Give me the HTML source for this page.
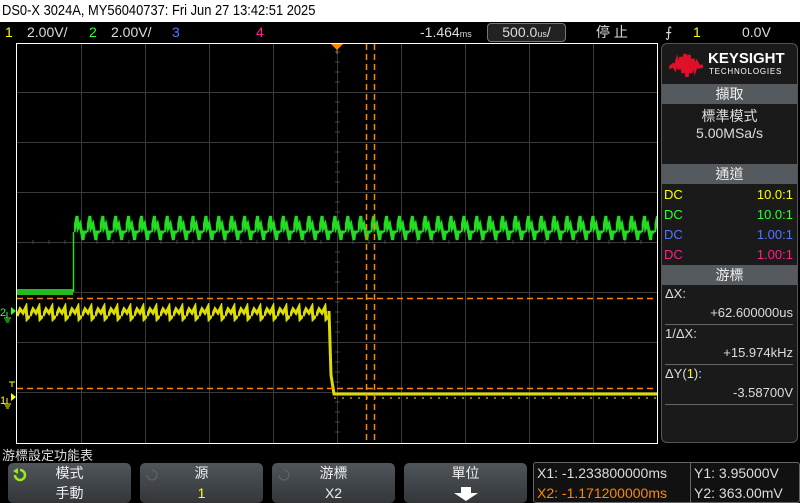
<!DOCTYPE html>
<html><head><meta charset="utf-8"><style>
*{margin:0;padding:0;box-sizing:border-box}
body{width:800px;height:503px;background:#000;position:relative;overflow:hidden;font-family:"Liberation Sans","Noto Sans CJK TC",sans-serif;color:#ddd}
.a{position:absolute;white-space:nowrap}
#title{left:0;top:0;width:800px;height:22px;background:#fff;color:#000;font-size:15px;line-height:22px;padding-left:2px}
.t{font-size:14px;top:22px;line-height:20px}
.panel{position:absolute;left:661px;top:43px;width:137px;height:400px;background:#1a1a1a;border:1px solid #555;border-radius:6px}
.hdr{position:absolute;left:0;width:135px;height:20px;background:#555a5e;color:#eee;font-size:14px;text-align:center;line-height:20px}
.btn{position:absolute;top:463px;height:40px;width:123px;border-radius:5px;background:linear-gradient(#50555a,#33373a);color:#eee;font-size:14px;text-align:center}
.btn div{height:20px;line-height:20px}
</style></head><body>
<div class="a" id="title"><span style="display:inline-block;transform:scaleX(0.86);transform-origin:left">DS0-X 3024A, MY56040737: Fri Jun 27 13:42:51 2025</span></div>
<div class="a t" style="left:5px;color:#ff0">1</div>
<div class="a t" style="left:27px">2.00V/</div>
<div class="a t" style="left:89px;color:#3f3">2</div>
<div class="a t" style="left:111px">2.00V/</div>
<div class="a t" style="left:172px;color:#57f">3</div>
<div class="a t" style="left:256px;color:#f28">4</div>
<div class="a t" style="left:420px">-1.464<span style="font-size:9px">ms</span></div>
<div class="a" style="left:487px;top:23px;width:79px;height:19px;border:1px solid #777;border-radius:4px;background:#222;font-size:14px;text-align:center;line-height:17px">500.0<span style="font-size:9px">us</span>/</div>
<div class="a t" style="left:596px">停 止</div>
<div class="a t" style="left:665px">&#x2A0D;</div>
<div class="a t" style="left:693px;color:#ff0">1</div>
<div class="a t" style="left:742px">0.0V</div>

<svg class="a" style="left:0;top:0" width="660" height="450">
<defs>
<pattern id="g" x="74" y="212" width="12.9" height="34" patternUnits="userSpaceOnUse">
<polyline points="0,20 3,4 4,16 6,12 9,28 10,20 12.9,20" fill="none" stroke="#2d2" stroke-width="3"/>
</pattern>
<pattern id="y" x="17" y="303" width="13" height="26" patternUnits="userSpaceOnUse">
<polyline points="0,13 3,6 6,10 9,4 10,16 13,13" fill="none" stroke="#dd0" stroke-width="3"/>
</pattern>
</defs>
<g stroke="#3a3a3a" stroke-width="1">
<path d="M81.5 43V443M145.5 43V443M209.5 43V443M273.5 43V443M337.5 43V443M401.5 43V443M465.5 43V443M529.5 43V443M593.5 43V443"/>
<path d="M16 92.5H657M16 142.5H657M16 192.5H657M16 242.5H657M16 292.5H657M16 342.5H657M16 392.5H657"/>
</g>
<g stroke="#444"><path d="M33 240v4M49 240v4M65 240v4M97 240v4M113 240v4M129 240v4M161 240v4M177 240v4M193 240v4M225 240v4M241 240v4M257 240v4M289 240v4M305 240v4M321 240v4M353 240v4M369 240v4M385 240v4M417 240v4M433 240v4M449 240v4M481 240v4M497 240v4M513 240v4M545 240v4M561 240v4M577 240v4M609 240v4M625 240v4M641 240v4"/>
<path d="M335 52h5M335 62h5M335 72h5M335 82h5M335 102h5M335 112h5M335 122h5M335 132h5M335 152h5M335 162h5M335 172h5M335 182h5M335 202h5M335 212h5M335 222h5M335 232h5M335 252h5M335 262h5M335 272h5M335 282h5M335 302h5M335 312h5M335 322h5M335 332h5M335 352h5M335 362h5M335 372h5M335 382h5M335 402h5M335 412h5M335 422h5M335 432h5"/></g>
<rect x="16.5" y="43.5" width="641" height="400" fill="none" stroke="#fff"/>
<rect x="17" y="289" width="56" height="6" fill="#2b2"/>
<path d="M73.5 292V232" stroke="#2d2" stroke-width="1.5"/>
<rect x="74" y="212" width="583" height="34" fill="url(#g)"/>
<rect x="17" y="303" width="312" height="26" fill="url(#y)"/>
<path d="M329 311L331 375L334 394H657" fill="none" stroke="#dd0" stroke-width="3"/>
<path d="M334 398H657" stroke="#770" stroke-width="2" stroke-dasharray="2 6"/>
<g stroke="#f80" stroke-width="1.5" stroke-dasharray="6 4">
<path d="M17 298.5H657M17 388.5H657M366.5 44V443M374.5 44V443"/></g>
<path d="M331 44h12l-6 6z" fill="#f80"/>
<path d="M337 50v4" stroke="#888"/>
<text x="0" y="316" fill="#3f3" font-size="11" font-family="Liberation Sans">2</text>
<path d="M11 307l5 4-5 4z" fill="#3f3"/><path d="M7 312v6M4 318h7M5 320h5M6 322h3" stroke="#3f3"/>
<text x="0" y="404" fill="#ff0" font-size="11" font-family="Liberation Sans">1</text>
<path d="M11 393l5 4-5 4z" fill="#ff0"/><path d="M7 398v6M4 404h7M5 406h5M6 408h3M9 382h6M12 382v5" stroke="#ff0"/>
</svg>

<div class="panel">
<svg style="position:absolute;left:7px;top:7px" width="40" height="28"><path d="M0 17 L4 14 6 17 8 10 10 18 12 6 14 22 16 3 18 26 20 4 22 22 24 8 26 18 28 12 30 16 34 15" fill="none" stroke="#e0102a" stroke-width="3.5"/></svg>
<div class="a" style="left:46px;top:6px;font-size:15px;font-weight:bold;color:#fff">KEYSIGHT</div>
<div class="a" style="left:47px;top:23px;font-size:8px;color:#fff;letter-spacing:0.8px">TECHNOLOGIES</div>
<div class="hdr" style="top:40px">擷取</div>
<div class="a" style="left:0;width:135px;text-align:center;top:62px;font-size:14px">標準模式</div>
<div class="a" style="left:0;width:135px;text-align:center;top:81px;font-size:14px">5.00MSa/s</div>
<div class="hdr" style="top:120px">通道</div>
<div class="a" style="left:2px;top:141px;font-size:13px;line-height:20px;color:#ff0">DC</div><div class="a" style="right:4px;top:141px;font-size:13px;line-height:20px;color:#ff0">10.0:1</div>
<div class="a" style="left:2px;top:161px;font-size:13px;line-height:20px;color:#3f3">DC</div><div class="a" style="right:4px;top:161px;font-size:13px;line-height:20px;color:#3f3">10.0:1</div>
<div class="a" style="left:2px;top:181px;font-size:13px;line-height:20px;color:#57f">DC</div><div class="a" style="right:4px;top:181px;font-size:13px;line-height:20px;color:#57f">1.00:1</div>
<div class="a" style="left:2px;top:201px;font-size:13px;line-height:20px;color:#f28">DC</div><div class="a" style="right:4px;top:201px;font-size:13px;line-height:20px;color:#f28">1.00:1</div>
<div class="hdr" style="top:221px">游標</div>
<div class="a" style="left:3px;top:242px;font-size:13px">ΔX:</div>
<div class="a" style="right:4px;top:261px;font-size:13px">+62.600000us</div>
<div class="a" style="left:3px;top:280px;width:128px;border-top:1px solid #666"></div>
<div class="a" style="left:3px;top:282px;font-size:13px">1/ΔX:</div>
<div class="a" style="right:4px;top:301px;font-size:13px">+15.974kHz</div>
<div class="a" style="left:3px;top:320px;width:128px;border-top:1px solid #666"></div>
<div class="a" style="left:3px;top:322px;font-size:13px">ΔY(<span style="color:#ff0">1</span>):</div>
<div class="a" style="right:4px;top:341px;font-size:13px">-3.58700V</div>
<div class="a" style="left:3px;top:360px;width:128px;border-top:1px solid #666"></div>
</div>

<div class="a" style="left:2px;top:445px;font-size:13px;color:#ddd">游標設定功能表</div>
<div class="btn" style="left:8px"><div>模式</div><div>手動</div>
<svg style="position:absolute;left:5px;top:5px" width="14" height="14"><path d="M7 2a5 5 0 1 1-5 5" fill="none" stroke="#9e1" stroke-width="2.5"/><path d="M0 3l5-3v6z" fill="#9e1"/></svg></div>
<div class="btn" style="left:140px"><div>源</div><div style="color:#ff0">1</div>
<svg style="position:absolute;left:5px;top:5px" width="14" height="14"><path d="M7 2a5 5 0 1 1-5 5" fill="none" stroke="#666" stroke-width="1"/></svg></div>
<div class="btn" style="left:272px"><div>游標</div><div>X2</div>
<svg style="position:absolute;left:5px;top:5px" width="14" height="14"><path d="M7 2a5 5 0 1 1-5 5" fill="none" stroke="#666" stroke-width="1"/></svg></div>
<div class="btn" style="left:404px"><div>單位</div>
<svg style="position:absolute;left:48px;top:24px" width="28" height="14"><path d="M9 0h10v6h7l-12 8-12-8h7z" fill="#fff"/></svg></div>
<div class="a" style="left:533px;top:462px;width:267px;height:41px;border:1px solid #666;border-radius:3px;background:#111"></div>
<div class="a" style="left:690px;top:462px;height:41px;border-left:1px solid #666"></div>
<div class="a" style="left:537px;top:463px;font-size:14px;line-height:20px">X1: -1.233800000ms</div>
<div class="a" style="left:537px;top:483px;font-size:14px;line-height:20px;color:#f80">X2: -1.171200000ms</div>
<div class="a" style="left:694px;top:463px;font-size:14px;line-height:20px">Y1: 3.95000V</div>
<div class="a" style="left:694px;top:483px;font-size:14px;line-height:20px">Y2: 363.00mV</div>
</body></html>
